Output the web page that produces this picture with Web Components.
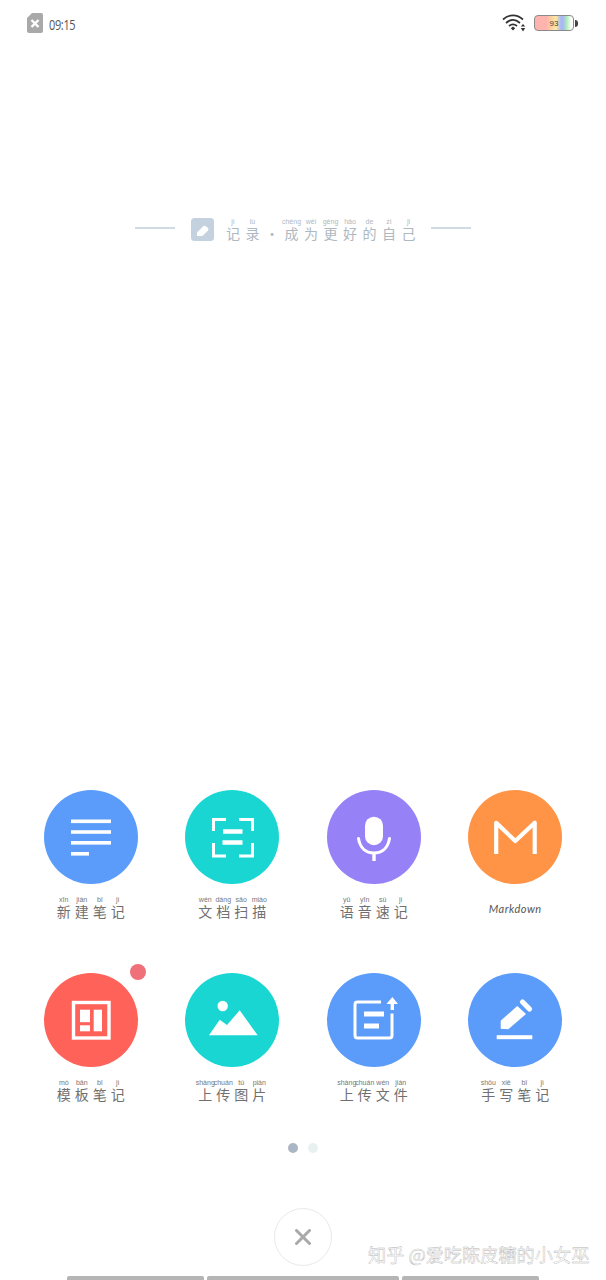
<!DOCTYPE html>
<html lang="zh">
<head>
<meta charset="utf-8">
<title>新建笔记</title>
<style>
  html, body { margin: 0; padding: 0; background: #fff; }
  body { font-family: "Noto Sans CJK SC", "Noto Sans", sans-serif; }
  .latin { margin-top: 5px; font: italic 400 11px/15px "Lato", sans-serif; letter-spacing: 0.5px; color: #555; }
</style>
</head>
<body>
<note-page>
  <status-bar slot="top" time="09:15" level="93"></status-bar>

  <note-tagline slot="top">
    <py-char py="jì">记</py-char><py-char py="lù">录</py-char><py-char>·</py-char><py-char py="chéng">成</py-char><py-char py="wéi">为</py-char><py-char py="gèng">更</py-char><py-char py="hǎo">好</py-char><py-char py="de">的</py-char><py-char py="zì">自</py-char><py-char py="jǐ">己</py-char>
  </note-tagline>

  <action-grid>
    <action-tile color="#5b9cfb">
      <svg slot="icon" viewBox="0 0 94 94" width="94" height="94" fill="#fff">
        <rect x="27" y="29.5" width="40" height="3.6"/>
        <rect x="27" y="40.2" width="40" height="3.6"/>
        <rect x="27" y="51" width="40" height="3.6"/>
        <rect x="27" y="62" width="18" height="3.6"/>
      </svg>
      <py-char py="xīn">新</py-char><py-char py="jiàn">建</py-char><py-char py="bǐ">笔</py-char><py-char py="jì">记</py-char>
    </action-tile>

    <action-tile color="#19d6d2">
      <svg slot="icon" viewBox="0 0 94 94" width="94" height="94" fill="none" stroke="#fff" stroke-width="3">
        <path d="M28.5 41V29.5H41M54 29.5H67.5V41M28.5 53V66H41M54 66H67.5V53"/>
        <path d="M38 41.5H57.5M37.5 52.5H57.5" stroke-width="4.6"/>
      </svg>
      <py-char py="wén">文</py-char><py-char py="dàng">档</py-char><py-char py="sǎo">扫</py-char><py-char py="miáo">描</py-char>
    </action-tile>

    <action-tile color="#9781f7">
      <svg slot="icon" viewBox="0 0 94 94" width="94" height="94" fill="none" stroke="#fff">
        <rect x="38" y="26.7" width="18" height="28.5" rx="9" fill="#fff" stroke="none"/>
        <path d="M31.5 48.5C33 58 39 63 47 63S61 58 62.5 48.5" stroke-width="3" stroke-linecap="round"/>
        <path d="M47 63V71" stroke-width="3.4"/>
      </svg>
      <py-char py="yǔ">语</py-char><py-char py="yīn">音</py-char><py-char py="sù">速</py-char><py-char py="jì">记</py-char>
    </action-tile>

    <action-tile color="#ff9346">
      <svg slot="icon" viewBox="0 0 94 94" width="94" height="94" fill="none" stroke="#fff" stroke-width="4.2" stroke-linejoin="round">
        <path d="M28.2 64V32.8L47.3 51L66.7 32.8V64"/>
      </svg>
      <span class="latin">Markdown</span>
    </action-tile>

    <action-tile color="#ff6259" badge>
      <svg slot="icon" viewBox="0 0 94 94" width="94" height="94" fill="#fff">
        <rect x="29.5" y="29.5" width="35.5" height="35.5" fill="none" stroke="#fff" stroke-width="3.4"/>
        <rect x="36" y="36.7" width="10" height="12.5"/>
        <rect x="36" y="52.3" width="10" height="6"/>
        <rect x="49.7" y="36.7" width="8.3" height="21.6"/>
      </svg>
      <py-char py="mó">模</py-char><py-char py="bǎn">板</py-char><py-char py="bǐ">笔</py-char><py-char py="jì">记</py-char>
    </action-tile>

    <action-tile color="#19d6d2">
      <svg slot="icon" viewBox="0 0 94 94" width="94" height="94" fill="#fff">
        <circle cx="37.7" cy="33" r="5.2"/>
        <path d="M24 62.3L34.7 46.7L42 52L54.7 37.3L72.7 62.3Z"/>
      </svg>
      <py-char py="shàng">上</py-char><py-char py="chuán">传</py-char><py-char py="tú">图</py-char><py-char py="piàn">片</py-char>
    </action-tile>

    <action-tile color="#5b9cfb">
      <svg slot="icon" viewBox="0 0 94 94" width="94" height="94" fill="#fff">
        <path d="M54 29H30.5Q28 29 28 31.5V62.5Q28 65 30.5 65H62.5Q65 65 65 62.5V40.5" fill="none" stroke="#fff" stroke-width="3"/>
        <rect x="37" y="38.5" width="20" height="5"/>
        <rect x="37" y="50.5" width="15" height="5"/>
        <path d="M65.3 24L71 31H67V37H63.6V31H59.5Z"/>
      </svg>
      <py-char py="shàng">上</py-char><py-char py="chuán">传</py-char><py-char py="wén">文</py-char><py-char py="jiàn">件</py-char>
    </action-tile>

    <action-tile color="#5b9cfb">
      <svg slot="icon" viewBox="0 0 94 94" width="94" height="94" fill="#fff">
        <path d="M32.7 55.8V47.7L49.3 33L58 41L40.3 56.3Z"/>
        <path d="M54.5 29L61.5 36" fill="none" stroke="#fff" stroke-width="5.2" stroke-linecap="round"/>
        <rect x="28.7" y="62.2" width="35.6" height="4"/>
      </svg>
      <py-char py="shǒu">手</py-char><py-char py="xiě">写</py-char><py-char py="bǐ">笔</py-char><py-char py="jì">记</py-char>
    </action-tile>
  </action-grid>

  <page-dots></page-dots>
  <close-button></close-button>
  <nav-bars></nav-bars>
  <span slot="overlay">知乎 @爱吃陈皮糖的小女巫</span>
</note-page>

<script>
(function () {
  const define = (name, markup) => {
    const template = document.createElement('template');
    template.innerHTML = markup;
    customElements.define(name, class extends HTMLElement {
      constructor() {
        super();
        this.attachShadow({ mode: 'open' });
        this.shadowRoot.append(template.content.cloneNode(true));
      }
    });
  };

  define('note-page', `
    <style>
      :host {
        display: flex;
        flex-direction: column;
        position: relative;
        width: 606px;
        height: 1280px;
        overflow: hidden;
        background: #fff;
      }
      .watermark {
        position: absolute;
        left: 368px;
        top: 1241px;
        font-size: 18.2px;
        line-height: 26px;
        white-space: nowrap;
        color: #fff;
        -webkit-text-stroke: 0.4px #b4b4b4;
      }
    </style>
    <slot name="top"></slot>
    <slot></slot>
    <div class="watermark"><slot name="overlay"></slot></div>
  `);

  class PyChar extends HTMLElement {
    constructor() {
      super();
      this.attachShadow({ mode: 'open' });
      this.shadowRoot.innerHTML = `
        <style>
          :host {
            display: inline-flex;
            flex-direction: column;
            align-items: center;
            width: var(--cell, 18px);
          }
          .py {
            font-family: "Liberation Sans", sans-serif;
            font-size: 7px;
            line-height: 8px;
            height: 8px;
            white-space: nowrap;
            color: var(--py-color, #777);
          }
          .ch {
            font-size: var(--char, 14px);
            line-height: 15px;
            height: 15px;
            color: var(--char-color, #707070);
          }
        </style>
        <span class="py">${this.getAttribute('py') || ''}</span>
        <span class="ch"><slot></slot></span>
      `;
    }
  }
  customElements.define('py-char', PyChar);

  class StatusBar extends HTMLElement {
    constructor() {
      super();
      this.attachShadow({ mode: 'open' });
      this.shadowRoot.innerHTML = `
        <style>
          :host {
            display: flex;
            align-items: center;
            box-sizing: border-box;
            height: 46px;
            padding: 0 28px 0 27px;
            color: #555;
          }
          .time {
            margin: 3px 0 0 6px;
            font: 400 14px/19px "Open Sans", sans-serif;
            letter-spacing: -0.4px;
            transform: scaleX(0.78);
            transform-origin: left center;
          }
          .right {
            margin-left: auto;
            display: flex;
            align-items: center;
            gap: 8px;
          }
          .battery {
            display: flex;
            align-items: center;
            justify-content: center;
            box-sizing: border-box;
            width: 40px;
            height: 16px;
            border: 1.5px solid #8a8a8a;
            border-radius: 4px;
            background: linear-gradient(90deg, #ffb3ae 0 30%, #ffd0a0 42%, #ffe9a0 55%, #a9b9f5 68%, #a9b9f5 74%, #aef0b5 84%, #fff 95%);
            font: 8px/13px "Liberation Sans", sans-serif;
            color: #444;
          }
          .nub { width: 3px; height: 7px; margin-left: -7px; border-radius: 0 3px 3px 0; background: #444; }
        </style>
        <svg width="16" height="20" viewBox="0 0 16 20">
          <path d="M5 0H14Q16 0 16 2V18Q16 20 14 20H2Q0 20 0 18V5Z" fill="#a9a9a9"/>
          <path d="M4.5 7L11.5 14M11.5 7L4.5 14" stroke="#fff" stroke-width="2.4"/>
        </svg>
        <span class="time">${this.getAttribute('time')}</span>
        <div class="right">
          <svg width="24" height="18" viewBox="0 0 24 18" fill="none" stroke="#333" stroke-width="1.7">
            <path d="M1 5.5C7 0 15 0 21 5.5M4 9C8.5 5 13.5 5 18 9M7 12C9.5 10 12.5 10 15 12"/>
            <path d="M8.8 14.2L11 12.6L13.2 14.2L11 16.6Z" fill="#333" stroke="none"/>
            <path d="M21 10L23.2 12.6H18.8ZM21 17.6L23.2 14H18.8Z" fill="#333" stroke="none"/>
          </svg>
          <div class="battery">${this.getAttribute('level')}</div>
          <div class="nub"></div>
        </div>
      `;
    }
  }
  customElements.define('status-bar', StatusBar);

  define('note-tagline', `
    <style>
      :host {
        --cell: 19.5px;
        --char: 14px;
        --char-color: #aeb8bf;
        --py-color: #b0b8be;
        display: flex;
        align-items: center;
        justify-content: center;
        height: 23px;
        margin-top: 172px;
      }
      .line { width: 40px; height: 2px; margin-top: -3px; background: #cfdde2; }
      .logo { margin: 0 9px 0 16px; }
      .text { display: flex; margin-right: 12.5px; }
    </style>
    <div class="line"></div>
    <svg class="logo" width="23" height="23" viewBox="0 0 23 23">
      <rect width="23" height="23" rx="3.5" fill="#c3d2de"/>
      <path d="M6 18V14.5L12 8.5Q13 7.5 14.5 8L17 10Q18 11 17 12.5L11.5 18Z" fill="#fff"/>
    </svg>
    <div class="text"><slot></slot></div>
    <div class="line"></div>
  `);

  define('action-grid', `
    <style>
      :host {
        display: grid;
        grid-template-columns: repeat(4, 1fr);
        row-gap: 52px;
        margin-top: 549px;
        padding: 0 20px;
      }
    </style>
    <slot></slot>
  `);

  class ActionTile extends HTMLElement {
    constructor() {
      super();
      this.attachShadow({ mode: 'open' });
      this.shadowRoot.innerHTML = `
        <style>
          :host {
            display: flex;
            flex-direction: column;
            align-items: center;
            height: 131px;
          }
          .circle {
            position: relative;
            width: 94px;
            height: 94px;
            border-radius: 50%;
            background: ${this.getAttribute('color')};
          }
          ::slotted(svg) { display: block; }
          .badge {
            position: absolute;
            left: 86.5px;
            top: -9px;
            width: 16px;
            height: 16px;
            border-radius: 50%;
            background: #ef7079;
            display: ${this.hasAttribute('badge') ? 'block' : 'none'};
          }
          .label {
            display: flex;
            align-items: flex-start;
            justify-content: center;
            height: 23px;
            margin-top: 12px;
          }
        </style>
        <div class="circle">
          <slot name="icon"></slot>
          <div class="badge"></div>
        </div>
        <div class="label"><slot></slot></div>
      `;
    }
  }
  customElements.define('action-tile', ActionTile);

  define('page-dots', `
    <style>
      :host { display: flex; justify-content: center; gap: 10px; margin-top: 39px; }
      i { width: 10px; height: 10px; border-radius: 50%; background: #aab6c4; }
      i + i { background: #e8f0f0; }
    </style>
    <i></i><i></i>
  `);

  define('close-button', `
    <style>
      :host {
        display: flex;
        align-items: center;
        justify-content: center;
        box-sizing: border-box;
        width: 58px;
        height: 58px;
        margin: 55px auto 0;
        border: 1.5px solid #e9e9e9;
        border-radius: 50%;
      }
    </style>
    <svg width="16" height="16" viewBox="0 0 16 16">
      <path d="M1.5 1.5L14.5 14.5M14.5 1.5L1.5 14.5" stroke="#a9a9a9" stroke-width="3" stroke-linecap="round"/>
    </svg>
  `);

  define('nav-bars', `
    <style>
      :host {
        display: flex;
        gap: 3px;
        height: 4px;
        margin-top: 10px;
        padding-left: 67px;
      }
      i { height: 4px; background: #b5b5b5; border-radius: 2px 2px 0 0; }
    </style>
    <i style="width:137px"></i><i style="width:192px"></i><i style="width:137px"></i>
  `);
})();
</script>
</body>
</html>
